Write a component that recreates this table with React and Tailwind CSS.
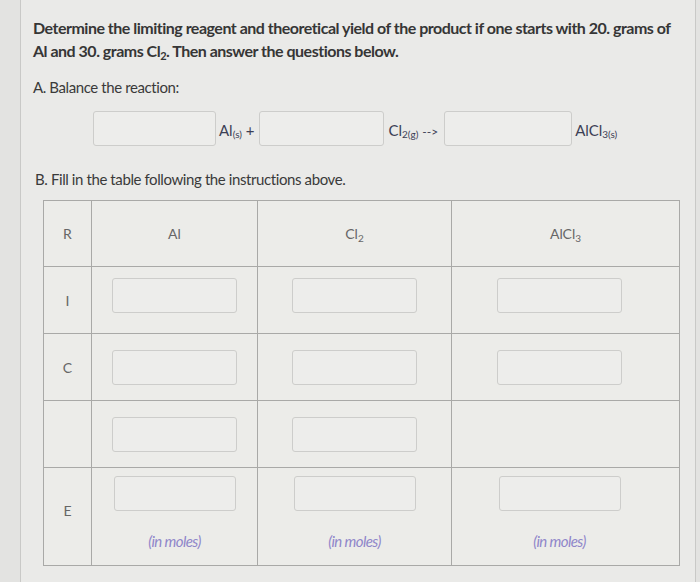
import React from 'react';

const font = { fontFamily: 'Lato, "Open Sans", sans-serif' };

const Box = ({ className = '' }) => (
  <div className={`h-[35px] rounded-[3px] border border-[#cdcdcb] bg-[#ededeb] ${className}`} />
);

const Cell = ({ children, className = '' }) => (
  <div className={`flex flex-col items-center justify-center border-r border-b border-[#a9a9a7] ${className}`}>
    {children}
  </div>
);

const rows = [
  { label: 'I', h: 'h-[67px]', boxes: [true, true, true], up: true },
  { label: 'C', h: 'h-[67px]', boxes: [true, true, true] },
  { label: '', h: 'h-[67px]', boxes: [true, true, false] },
  { label: 'E', h: 'h-[98px]', boxes: [true, true, true], moles: true },
];

export default function App() {
  return (
    <div className="w-[700px] h-[582px] overflow-hidden bg-[#e3e3e1] pl-[20px]" style={font}>
      <div className="w-[676px] h-full border-l border-r border-[#c9c9c7] bg-[#eaeae8] pt-[16px] pl-[12px]">
        <p className="text-[16px] font-bold leading-[23px] text-[#363636] tracking-[-0.5px]">
          Determine the limiting reagent and theoretical yield of the product if one starts with 20. grams of
          <br />
          Al and 30. grams Cl<sub className="text-[11px]">2</sub>. Then answer the questions below.
        </p>

        <p className="mt-[14px] text-[15px] text-[#3a3a3a] tracking-[-0.4px]">A. Balance the reaction:</p>

        <div className="mt-[12px] ml-[60px] flex items-center text-[15px] text-[#3c4055]">
          <Box className="w-[123px]" />
          <span className="ml-[3px] mt-[4px]">
            Al<sub className="text-[10px]">(s)</sub> +
          </span>
          <Box className="ml-[5px] w-[125px]" />
          <span className="ml-[4px] mt-[4px]">
            Cl<sub className="text-[10px]">2(g)</sub> <span className="text-[12px]">--&gt;</span>
          </span>
          <Box className="ml-[6px] w-[128px]" />
          <span className="ml-[3px] mt-[4px]">
            AlCl<sub className="text-[10px]">3(s)</sub>
          </span>
        </div>

        <p className="mt-[22px] ml-[2px] text-[15px] text-[#3a3a3a] tracking-[-0.4px]">
          B. Fill in the table following the instructions above.
        </p>

        <div className="mt-[10px] ml-[10px] w-[637px] border-t border-l border-[#a9a9a7] bg-[#ecece9]">
          <div className="grid grid-cols-[48px_166px_194px_228px] h-[66px] text-[14px] text-[#666]">
            <Cell>R</Cell>
            <Cell>Al</Cell>
            <Cell>
              <span>
                Cl<sub className="text-[10px]">2</sub>
              </span>
            </Cell>
            <Cell>
              <span>
                AlCl<sub className="text-[10px]">3</sub>
              </span>
            </Cell>
          </div>
          {rows.map((r, i) => (
            <div key={i} className={`grid grid-cols-[48px_166px_194px_228px] ${r.h} text-[14px] text-[#666]`}>
              <Cell>
                <span className={r.moles ? 'mb-[12px]' : ''}>{r.label}</span>
              </Cell>
              {r.boxes.map((b, j) => (
                <Cell key={j} className={r.moles ? 'justify-start pt-[8px]' : ''}>
                  <div className={`flex flex-col items-center ${j === 2 ? 'mr-[12px]' : ''} ${r.up ? 'mb-[10px]' : ''}`}>
                    {b && <Box className={r.moles ? 'w-[122px] h-[33px]' : 'w-[125px]'} />}
                    {r.moles && (
                      <span className="mt-[19px] text-[15px] italic text-[#8f86c9] tracking-[-0.6px]">(in moles)</span>
                    )}
                  </div>
                </Cell>
              ))}
            </div>
          ))}
        </div>
      </div>
    </div>
  );
}
